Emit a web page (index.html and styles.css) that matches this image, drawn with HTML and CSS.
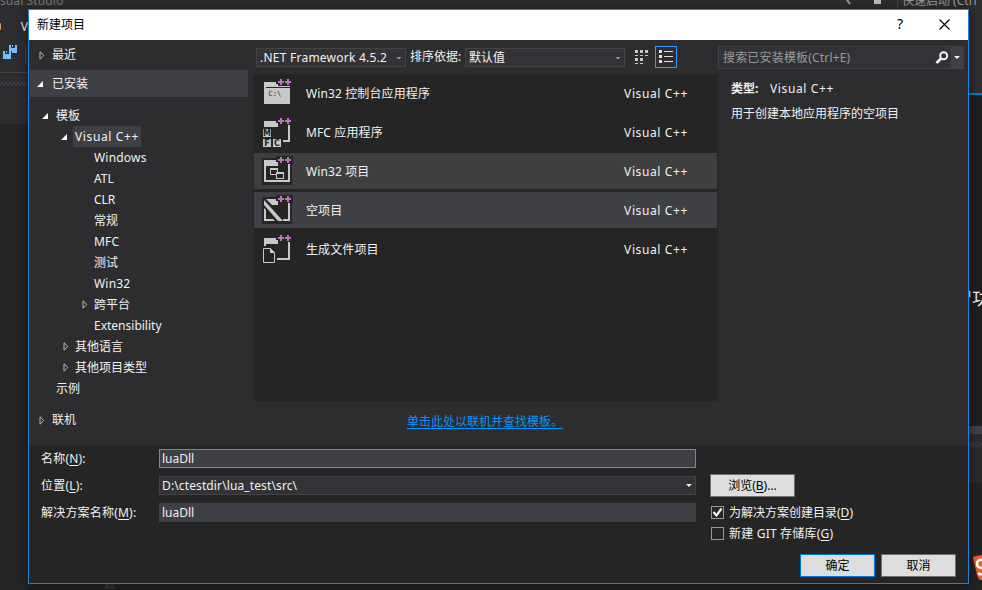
FILE: index.html
```
<!DOCTYPE html>
<html lang="zh-CN">
<head>
<meta charset="utf-8">
<title>新建项目</title>
<link rel="stylesheet" href="styles.css">
</head>
<body>
<div class="ide">
  <div class="ide-left">
    <div class="ide-title">sual Studio</div>
    <div class="ide-menu"><i class="bit"></i><span>V</span></div>
    <div class="ide-tools">
      <svg width="26" height="22" viewBox="0 0 26 22" shape-rendering="crispEdges"><path fill="#75beff" d="M9 1h2v3h4V1h2v8h-5V7H9zM12 1h1v2h-1zM3 7h2v3h4V7h2v8H3zM6 7h1v2H6z"/><path stroke="#46464a" d="M25.5 0v20"/></svg>
    </div>
    <div class="ide-dock"><i class="dots"></i></div>
  </div>
  <div class="ide-foot"><i></i></div>
  <div class="ide-right">
    <div class="r-top"></div>
    <div class="r-doc">智功</div>
    <div class="r-split"></div>
    <div class="r-panel"><i class="dots"></i></div>
    <div class="r-rest"><svg width="9" height="25" viewBox="0 0 9 25"><path fill="#f2592b" d="M0 3Q0 1 3 1L9 0V25H7Q5 24 4 20Z"/><path d="M10 5Q4 4 4 9Q4 13 10 13M5 18Q7 20 10 19" fill="none" stroke="#fff" stroke-width="2.5"/></svg></div>
  </div>
  <div class="ide-quick"><svg width="40" height="5" viewBox="0 0 40 5"><path d="M2 0L5 4" stroke="#999" stroke-width="2"/><path fill="#bbb" d="M29 0h7v4h-7z"/></svg><span>快速启动 (Ctrl</span></div>
</div>

<div class="dialog">
  <header class="titlebar"><span class="caption">新建项目</span><span class="help">?</span>
    <svg width="11" height="11" viewBox="0 0 11 11"><path d="M.5.5l10 10M10.5.5l-10 10" stroke="#000" stroke-width="1.1"/></svg>
  </header>
  <div class="main">
    <nav class="side">
      <div class="group"><svg class="arr" viewBox="0 0 6 9"><path d="M1 .8v7.4L4.8 4.5z"/></svg>最近</div>
      <div class="group selected"><svg class="arr open" viewBox="0 0 6 6"><path d="M6 0v6H0z"/></svg>已安装</div>
      <div class="tree">
        <div class="node l1"><svg class="arr open" viewBox="0 0 6 6"><path d="M6 0v6H0z"/></svg><span>模板</span></div>
        <div class="node l2"><svg class="arr open" viewBox="0 0 6 6"><path d="M6 0v6H0z"/></svg><span class="picked vc">Visual C++</span></div>
        <div class="node l3"><span class="wide">Windows</span></div>
        <div class="node l3"><span>ATL</span></div>
        <div class="node l3"><span>CLR</span></div>
        <div class="node l3"><span>常规</span></div>
        <div class="node l3"><span class="wide">MFC</span></div>
        <div class="node l3"><span>测试</span></div>
        <div class="node l3"><span class="wide">Win32</span></div>
        <div class="node l3"><svg class="arr" viewBox="0 0 6 9"><path d="M1 .8v7.4L4.8 4.5z"/></svg><span>跨平台</span></div>
        <div class="node l3"><span>Extensibility</span></div>
        <div class="node l2"><svg class="arr" viewBox="0 0 6 9"><path d="M1 .8v7.4L4.8 4.5z"/></svg><span>其他语言</span></div>
        <div class="node l2"><svg class="arr" viewBox="0 0 6 9"><path d="M1 .8v7.4L4.8 4.5z"/></svg><span>其他项目类型</span></div>
        <div class="node l1"><span>示例</span></div>
      </div>
      <div class="group online"><svg class="arr" viewBox="0 0 6 9"><path d="M1 .8v7.4L4.8 4.5z"/></svg>联机</div>
    </nav>

    <section class="center">
      <div class="toolbar">
        <div class="combo framework"><span>.NET Framework 4.5.2</span><i class="drop"></i></div>
        <span class="sort-label">排序依据:</span>
        <div class="combo sort"><span>默认值</span><i class="drop"></i></div>
        <svg class="grid-icon" width="14" height="14" viewBox="0 0 14 14" shape-rendering="crispEdges"><path fill="#c8c8c8" d="M0 0h3v3H0zM5 0h3v3H5zM10 0h3v3h-3zM0 8h3v3H0zM5 8h3v3H5zM0 5h3v1H0zM5 5h3v1H5zM10 5h3v1h-3zM0 13h3v1H0zM5 13h3v1H5z"/></svg>
        <div class="list-toggle"><svg width="14" height="14" viewBox="0 0 14 14" shape-rendering="crispEdges"><path fill="#e0e0e0" d="M0 0h3v3H0zM0 5h3v3H0zM0 10h3v3H0zM5 1h9v1H5zM5 6h9v1H5zM5 11h9v1H5z"/></svg></div>
      </div>
      <div class="list">
        <div class="item">
          <svg class="ico" viewBox="0 0 31 30" shape-rendering="crispEdges"><path fill="#c8c8c8" d="M2 4h12v2h2v2h12v18H2z"/><path fill="#252526" d="M4 9h24v1H4z"/><path class="plus" d="M18 1h2v2h2v2h-2v2h-2V5h-2V3h2zM25 1h2v2h2v2h-2v2h-2V5h-2V3h2z"/><text class="glyph" x="6.500" y="18">C:\</text></svg>
          <span class="name">Win32 控制台应用程序</span><span class="lang vc">Visual C++</span></div>
        <div class="item">
          <svg class="ico" viewBox="0 0 31 30" shape-rendering="crispEdges"><path fill="#c8c8c8" d="M2 4h12v2h2v4H2zM26 8h2v17h-7v-2h5zM1 12h8v8H1zM1 22h8v8H1zM11 22h8v8h-8z"/><path class="plus" d="M18 1h2v2h2v2h-2v2h-2V5h-2V3h2zM25 1h2v2h2v2h-2v2h-2V5h-2V3h2z"/><g class="glyph bold"><text x="5" y="19">M</text><text x="5" y="29">F</text><text x="15" y="29">C</text></g></svg>
          <span class="name">MFC 应用程序</span><span class="lang vc">Visual C++</span></div>
        <div class="item hover">
          <svg class="ico" viewBox="0 0 31 30" shape-rendering="crispEdges"><path fill="#252526" d="M0 2h14V0h17v8h-1v21H0z"/><path fill="#c8c8c8" d="M2 4h12v2h2v4h10V8h2v18H2zM4 10v14h22V10z" fill-rule="evenodd"/><path class="plus" d="M18 1h2v2h2v2h-2v2h-2V5h-2V3h2zM25 1h2v2h2v2h-2v2h-2V5h-2V3h2z"/><path fill="none" stroke="#c8c8c8" d="M14 18.500H8.500v-6h7V16M14.500 16.500h7v6h-7zM8 13.500h8M14 17.500h8"/></svg>
          <span class="name">Win32 项目</span><span class="lang vc">Visual C++</span></div>
        <div class="item current">
          <svg class="ico" viewBox="0 0 31 30"><path fill="#252526" d="M0 2h14V0h17v8h-1v21H0z"/><path fill="#c8c8c8" d="M4 4h10v2h2v4h10V8h2v18h-7v-2h5V10H10zM2 5l19 21h-5L2 10zM2 13l2 2v9h7l2 2H2z"/><path class="plus" shape-rendering="crispEdges" d="M18 1h2v2h2v2h-2v2h-2V5h-2V3h2zM25 1h2v2h2v2h-2v2h-2V5h-2V3h2z"/></svg>
          <span class="name">空项目</span><span class="lang vc">Visual C++</span></div>
        <div class="item">
          <svg class="ico" viewBox="0 0 31 30"><path fill="#c8c8c8" d="M2 4h12v2h2v4h10V8h2v18H15v-2h11V10H4v2H2z"/><path class="plus" shape-rendering="crispEdges" d="M18 1h2v2h2v2h-2v2h-2V5h-2V3h2zM25 1h2v2h2v2h-2v2h-2V5h-2V3h2z"/><path fill="#252526" stroke="#c8c8c8" d="M1.500 14.500h7l4 4v10h-11z"/><path fill="#c8c8c8" d="M8 14l5 5H8z"/></svg>
          <span class="name">生成文件项目</span><span class="lang vc">Visual C++</span></div>
      </div>
      <div class="more"><a>单击此处以联机并查找模板。</a></div>
    </section>

    <aside class="info">
      <div class="search"><span>搜索已安装模板(Ctrl+E)</span>
        <svg width="14" height="14" viewBox="0 0 14 14"><circle cx="8.700" cy="4.800" r="3.500" fill="none" stroke="#f1f1f1" stroke-width="2"/><path d="M6 7.500L1.500 12" stroke="#f1f1f1" stroke-width="2.800"/></svg>
        <b class="search-drop"><i class="drop bright"></i></b></div>
      <div class="type"><b>类型:</b><span class="vc">Visual C++</span></div>
      <p>用于创建本地应用程序的空项目</p>
    </aside>
  </div>

  <footer class="form">
    <div class="fields">
      <label>名称(<u>N</u>):</label><div class="input focused">luaDll</div>
      <label>位置(<u>L</u>):</label><div class="input path"><span>D:\ctestdir\lua_test\src\</span><i class="drop bright"></i></div>
      <label>解决方案名称(<u>M</u>):</label><div class="input">luaDll</div>
    </div>
    <div class="actions">
      <div class="btn browse">浏览(<u>B</u>)...</div>
      <div class="check"><i class="box"><svg width="11" height="11" viewBox="0 0 11 11"><path d="M1.500 5l3 3.500L9.500 1.500" fill="none" stroke="#f1f1f1" stroke-width="2.200"/></svg></i><span>为解决方案创建目录(<u>D</u>)</span></div>
      <div class="check git"><i class="box"></i><span>新建 GIT 存储库(<u>G</u>)</span></div>
      <div class="buttons"><div class="btn ok">确定</div><div class="btn">取消</div></div>
    </div>
  </footer>
</div>
</body>
</html>
```
FILE: styles.css
```
* { box-sizing: border-box; }
body {
  margin: 0; width: 982px; height: 590px; overflow: hidden; position: relative;
  background: #252526; color: #f1f1f1;
  font: 12px/16px "Noto Sans", "Noto Sans CJK SC", sans-serif;
  white-space: nowrap;
}
i, b.search-drop { font-style: normal; display: block; }
svg { display: block; flex: none; }
u { text-underline-offset: 2px; }
.vc { letter-spacing: .62px; }
.wide { letter-spacing: .2px; }

/* window behind the dialog */
.ide { display: grid; grid-template-columns: 28px 1fr 14px; grid-template-rows: 583px 7px; height: 590px; background: #2d2d30; }
.ide-left { grid-area: 1 / 1 / 3 / 2; background: #252526; }
.ide-title { height: 13px; line-height: 2px; color: #777; background: #2d2d30; font-size: 12px; letter-spacing: .1px; }
.ide-menu { height: 27px; display: flex; align-items: center; background: #2d2d30; line-height: 22px; }
.ide-menu .bit { width: 2px; height: 7px; border-radius: 0 4px 4px 0; background: #dc9a63; }
.ide-menu span { margin-left: 20px; }
.ide-tools { height: 33px; background: #2d2d30; border-bottom: 1px solid #424245; padding-top: 4px; }
.ide-dock { height: 51px; padding-top: 8px; background: #2d2d30; }
.dots { height: 5px; background: radial-gradient(circle, #505054 0.6px, transparent 0.8px) 0 0 / 4px 4px, radial-gradient(circle, #505054 0.6px, transparent 0.8px) 2px 2px / 4px 4px; }
.ide-foot { grid-area: 2 / 2 / 3 / 3; background: #232324; border-bottom: 1px solid #1d191a; padding-left: 78px; }
.ide-foot i { width: 8px; height: 6px; background: #2d2d30; border: solid #3f3f46; border-width: 0 1px; }
.ide-right { grid-area: 1 / 3 / 3 / 4; overflow: hidden; display: flex; flex-direction: column; }
.r-top { height: 95px; border-bottom: 2px solid #007acc; }
.r-doc { height: 331px; background: #1f1f20; padding-top: 193px; font-size: 18px; line-height: 20px; text-indent: -14px; }
.r-split { height: 8px; background: #3f3f46; }
.r-panel { height: 49px; padding-top: 8px; background: #2a2a2c; }
.r-rest { flex: 1; background: #222223; padding: 72px 0 0 5px; }
.ide-quick { position: absolute; left: 845px; top: 0; width: 137px; height: 9px; display: flex; color: #999; line-height: 1px; overflow: hidden; }
.ide-quick span { margin-left: 12px; padding-left: 4px; border-left: 1px solid #46464a; }

/* dialog */
.dialog { position: absolute; left: 28px; top: 9px; width: 941px; height: 575px; display: flex; flex-direction: column; background: #252526; border: 1px solid #1883d7; box-shadow: 0 1px 10px rgba(0,0,0,.45); }
.titlebar { height: 30px; background: #fff; color: #000; display: flex; align-items: center; padding: 0 18px 2px 8px; }
.caption { flex: 1; padding-top: 1px; }
.help { font-size: 14px; margin-right: 36px; }
.main { height: 405px; display: flex; background: #2d2d30; }

.side { width: 224px; padding: 2px 5px 0 1px; }
.group { display: flex; align-items: center; height: 27px; padding-left: 9px; }
.group:first-child { padding-bottom: 1px; }
.group .arr { margin-right: 7px; }
.group.selected { background: #3f3f46; margin-top: 1px; padding-left: 7px; }
.group.selected .arr { margin-right: 9px; }
.arr { width: 6px; height: 9px; fill: none; stroke: #b8b8b8; stroke-width: 1; }
.arr.open { height: 6px; fill: #fff; stroke: none; }
.tree { padding-top: 8px; }
.node { display: flex; align-items: center; height: 21px; }
.node .arr { margin: 0 6px 0 -12px; }
.node .arr.open { margin: 0 8px 0 -14px; }
.l1 { padding-left: 26px; }
.l2 { padding-left: 45px; }
.l3 { padding-left: 64px; }
.picked { background: #3f3f46; height: 21px; line-height: 21px; margin-left: -2px; padding: 0 2px; }
.online { margin-top: 8px; height: 26px; }

.center { width: 465px; }
.toolbar { height: 34px; padding-left: 3px; display: flex; align-items: center; }
.combo { height: 19px; display: flex; align-items: center; justify-content: space-between; background: #333337; border: 1px solid #434346; padding: 2px 3px 0; }
.framework { width: 150px; letter-spacing: .24px; }
.sort-label { width: 59px; padding-left: 4px; }
.sort { width: 160px; }
.sort span { margin-top: -1px; }
.drop { flex: none; width: 6px; height: 3px; background: #999; clip-path: polygon(0 0, 100% 0, 50% 100%); }
.drop.bright { background: #f1f1f1; }
.grid-icon { margin-left: 10px; }
.list-toggle { width: 22px; height: 22px; margin-left: 6px; border: 1px solid #3399ff; display: flex; align-items: center; justify-content: center; }
.list { height: 327px; padding: 1px; background: #252526; display: flex; flex-direction: column; gap: 3px; }
.item { height: 36px; display: flex; align-items: center; padding: 0 29px 0 8px; }
.item.hover { background: #3f3f40; }
.item.current { background: #3f3f46; }
.ico { width: 31px; height: 30px; }
.plus { fill: #bb73bd; }
.glyph { font: 7px "DejaVu Sans Mono", monospace; fill: #252526; }
.glyph.bold { font: bold 8px "DejaVu Sans", sans-serif; text-anchor: middle; }
.name { flex: 1; margin-left: 13px; padding-top: 2px; letter-spacing: .12px; }
.lang { padding-top: 2px; }
.more { padding: 13px 0 0 154px; }
.more a { color: #0097fb; text-decoration: underline; text-underline-offset: 2px; }

.info { width: 250px; padding-top: 6px; }
.search { width: 246px; height: 23px; display: flex; align-items: center; background: #333337; border: 1px solid #3f3f46; padding-left: 4px; color: #999; }
.search > span { flex: 1; letter-spacing: .18px; }
.search-drop { width: 12px; height: 21px; margin-left: 2px; background: #3f3f46; padding: 9px 0 0 3px; }
.type { display: flex; margin: 12px 0 0 13px; }
.type b { width: 39px; }
.info p { margin: 9px 0 0 13px; }

.form { flex: 1; display: flex; padding: 4px 12px 6px; }
.fields { display: grid; grid-template-columns: 118px 537px; grid-auto-rows: 19px; row-gap: 8px; align-items: center; align-content: start; }
.fields label { letter-spacing: .2px; }
.input { height: 19px; background: #3f3f46; padding: 0 3px; line-height: 19px; }
.input.focused { border: 1px solid #3399ff; padding: 0 2px; line-height: 17px; }
.input.path { border: 1px solid #434346; padding: 0 3px 0 2px; line-height: 17px; background: #333337; display: flex; align-items: center; justify-content: space-between; letter-spacing: .12px; }
.actions { padding: 25px 0 0 14px; flex: 1; }
.btn { width: 75px; height: 23px; display: flex; align-items: center; justify-content: center; background: #ddd; color: #000; border: 1px solid #707070; }
.browse { width: 85px; margin-bottom: 5px; }
.ok { border-color: #0078d7; }
.check { display: flex; align-items: center; height: 21px; padding-left: 1px; gap: 5px; }
.git { letter-spacing: .2px; }
.box { width: 13px; height: 13px; border: 1px solid #999; }
.buttons { display: flex; justify-content: flex-end; gap: 6px; margin-top: 10px; }
```
